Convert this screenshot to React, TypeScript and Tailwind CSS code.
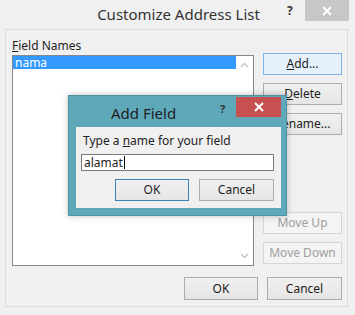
import React from "react";

const font = "font-['Segoe_UI','Noto_Sans',sans-serif]";

function Btn({
  children,
  className = "",
  disabled = false,
  variant = "normal",
}: {
  children: React.ReactNode;
  className?: string;
  disabled?: boolean;
  variant?: "normal" | "hover" | "default";
}) {
  const border =
    variant === "hover"
      ? "border-[#7eb4ea] bg-[#e5f1fb]"
      : variant === "default"
      ? "border-[#3c7fb1] bg-gradient-to-b from-[#f0f0f0] to-[#e5e5e5]"
      : disabled
      ? "border-[#d5d5d5] bg-[#f4f4f4]"
      : "border-[#acacac] bg-gradient-to-b from-[#f0f0f0] to-[#e5e5e5]";
  return (
    <div
      className={`flex items-center justify-center border ${border} ${
        disabled ? "text-[#a0a0a0]" : "text-[#1e1e1e]"
      } text-[12px] leading-none ${className}`}
    >
      <span>{children}</span>
    </div>
  );
}

export default function App() {
  return (
    <div
      className={`relative w-[355px] h-[315px] overflow-hidden bg-[#f0f0f0] ${font} text-[#1e1e1e]`}
    >
      {/* title bar */}
      <div className="relative h-[29px]">
        <div className="pt-[3px] pl-[2px] text-center text-[15px] leading-[22px] text-[#333]">
          Customize Address List
        </div>
        <div className="absolute left-[287px] top-[2px] text-[12px] font-bold text-[#333]">?</div>
        <div className="absolute left-[305px] top-0 flex h-[21px] w-[44px] items-center justify-center bg-[#c7c7c7]">
          <svg width="10" height="10" viewBox="0 0 10 10">
            <path d="M1 1 L9 9 M9 1 L1 9" stroke="#fff" strokeWidth="2" />
          </svg>
        </div>
      </div>

      {/* main panel */}
      <div className="ml-[5px] h-[278px] w-[343px] border border-[#dcdcdc] pl-[6px] pr-[5px] pt-[8px]">
        <div className="flex gap-[9px]">
          <div className="w-[242px]">
            <div className="text-[12px] leading-[16px]">
              <u>F</u>ield Names
            </div>
            <div className="mt-[1px] flex h-[211px] border border-[#828790] bg-white">
              <div className="flex-1">
                <div className="h-[13px] bg-[#3399ff] pl-[2px] text-[12px] leading-[13px] text-white">
                  nama
                </div>
              </div>
              <div className="flex w-[17px] flex-col items-center justify-between py-[6px]">
                <svg width="9" height="6" viewBox="0 0 9 6">
                  <path d="M1 5 L4.5 1.5 L8 5" fill="none" stroke="#c2c2c2" strokeWidth="1.3" />
                </svg>
                <svg width="9" height="6" viewBox="0 0 9 6">
                  <path d="M1 1 L4.5 4.5 L8 1" fill="none" stroke="#c2c2c2" strokeWidth="1.3" />
                </svg>
              </div>
            </div>
          </div>
          <div className="flex w-[79px] flex-col pt-[15px]">
            <Btn variant="hover" className="h-[22px]">
              <u>A</u>dd...
            </Btn>
            <Btn className="mt-[8px] h-[22px]">
              <u>D</u>elete
            </Btn>
            <Btn className="mt-[8px] h-[22px]">
              <u>R</u>ename...
            </Btn>
            <Btn disabled className="mt-[77px] h-[22px]">
              Move Up
            </Btn>
            <Btn disabled className="mt-[8px] h-[22px]">
              Move Down
            </Btn>
          </div>
        </div>
        <div className="mt-[11px] flex justify-end gap-[9px]">
          <Btn className="h-[23px] w-[74px]">OK</Btn>
          <Btn className="h-[23px] w-[75px]">Cancel</Btn>
        </div>
      </div>

      {/* Add Field dialog overlay */}
      <div className="absolute left-[68px] top-[95px] flex h-[121px] w-[219px] flex-col border border-[#4f93a4] bg-[#5ea8ba] shadow-[0_0_6px_rgba(0,0,0,0.25)]">
        <div className="relative h-[31px]">
          <div className="pl-[42px] pt-[7px] text-[15px] leading-[20px] text-[#1e1e1e]">Add Field</div>
          <div className="absolute left-[151px] top-[5px] text-[11px] font-bold text-[#333]">?</div>
          <div className="absolute left-[167px] top-[1px] flex h-[20px] w-[45px] items-center justify-center bg-[#c75050]">
            <svg width="10" height="10" viewBox="0 0 10 10">
              <path d="M1 1 L9 9 M9 1 L1 9" stroke="#fff" strokeWidth="2" />
            </svg>
          </div>
        </div>
        <div className="mb-[7px] ml-[7px] mr-[5px] flex-1 bg-[#f0f0f0] pl-[5px] pr-[7px] pt-[6px]">
          <div className="pl-[2px] text-[12px] leading-[16px]">
            Type a <u>n</u>ame for your field
          </div>
          <div className="mt-[5px] flex h-[17px] items-center border border-[#7a7a7a] bg-white pl-[2px] text-[12px] leading-none">
            alamat<span className="ml-[1px] inline-block h-[13px] w-[1px] bg-black" />
          </div>
          <div className="mt-[8px] flex justify-end gap-[10px]">
            <Btn variant="default" className="h-[22px] w-[74px]">OK</Btn>
            <Btn className="h-[22px] w-[75px]">Cancel</Btn>
          </div>
        </div>
      </div>
    </div>
  );
}
